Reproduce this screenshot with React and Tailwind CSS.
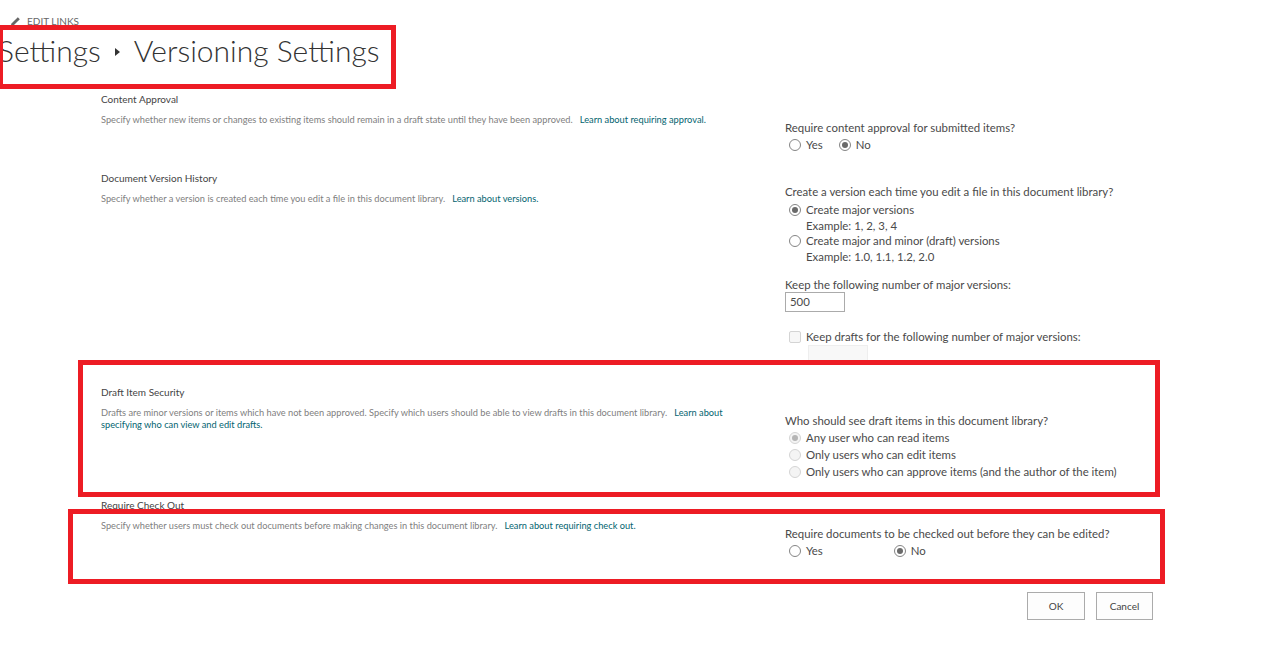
const FONT = "font-['Lato','Open_Sans',sans-serif]";

function Radio({ checked, disabled }) {
  return (
    <span className={`flex h-[12px] w-[12px] shrink-0 items-center justify-center rounded-full border ${disabled ? "border-[#d4d4d4] bg-[#f4f4f4]" : "border-[#858585] bg-white"}`}>
      {checked && <span className={`h-[6px] w-[6px] rounded-full ${disabled ? "bg-[#b5b5b5]" : "bg-[#6a6a6a]"}`} />}
    </span>
  );
}

function Option({ label, checked, disabled, className = "" }) {
  return (
    <div className={`flex items-center gap-[5px] pl-1 ${className || "h-[17px]"}`}>
      <Radio checked={checked} disabled={disabled} />
      <span>{label}</span>
    </div>
  );
}

function Section({ title, height, rightPad, children, desc }) {
  return (
    <div className="flex" style={{ height }}>
      <div className="w-[684px] shrink-0 pr-[30px]">
        <div className="text-[10px] leading-[14px] text-[#444444]">{title}</div>
        <div className="mt-[7.5px] text-[9.26px] leading-[12.5px] text-[#808080]">{desc}</div>
      </div>
      <div className="text-[11.4px] leading-[16px] text-[#4a4a4a]" style={{ paddingTop: rightPad }}>{children}</div>
    </div>
  );
}

function Link({ children }) {
  return <span className="text-[#03646f]">{children}</span>;
}

function Box({ className }) {
  return <div className={`pointer-events-none absolute border-[5px] border-[#ed1c24] ${className}`} />;
}

export default function App() {
  return (
    <div className={`relative h-[654px] w-[1280px] overflow-hidden bg-white ${FONT}`}>
      <div className="flex h-[14px] translate-y-[14px] items-center gap-[6px] pl-[10px] text-[10px] text-[#666666]">
        <svg width="11" height="11" viewBox="0 0 11 11"><path d="M0.5 10.5 L1.5 7.5 L7.8 1.2 L9.8 3.2 L3.5 9.5 Z" fill="#666666" /></svg>
        <span>EDIT LINKS</span>
      </div>
      <div className="ml-[-2px] mt-[16px] flex h-[40px] items-center whitespace-nowrap text-[30px] font-light leading-[40px] text-[#333333]">
        <span>Settings</span>
        <svg className="mx-[14px] mt-[4px]" width="5" height="8" viewBox="0 0 5 8"><path d="M0 0 L5 4 L0 8 Z" fill="#333333" /></svg>
        <span>Versioning Settings</span>
      </div>
      <div className="mt-[22px] pl-[101px]">
        <Section
          title="Content Approval"
          height={79}
          rightPad={28}
          desc={<>Specify whether new items or changes to existing items should remain in a draft state until they have been approved. &nbsp; <Link>Learn about requiring approval.</Link></>}
        >
          <div>Require content approval for submitted items?</div>
          <div className="flex">
            <Option label="Yes" className="h-[17px]" />
            <Option label="No" checked className="ml-[12px] h-[17px]" />
          </div>
        </Section>
        <Section
          title="Document Version History"
          height={214}
          rightPad={13}
          desc={<>Specify whether a version is created each time you edit a file in this document library. &nbsp; <Link>Learn about versions.</Link></>}
        >
          <div>Create a version each time you edit a file in this document library?</div>
          <Option label="Create major versions" checked className="mt-[1px] h-[17px]" />
          <div className="h-[15px] pl-[21px]">Example: 1, 2, 3, 4</div>
          <Option label="Create major and minor (draft) versions" className="h-[16px]" />
          <div className="h-[15px] pl-[21px]">Example: 1.0, 1.1, 1.2, 2.0</div>
          <div className="mt-[13px]">Keep the following number of major versions:</div>
          <div className="-mt-px flex h-[20px] w-[60px] items-center border border-[#ababab] pl-[4px]">500</div>
          <div className="mt-[16px] flex h-[17px] items-center gap-[5px] pl-[4px]">
            <span className="h-[12px] w-[12px] rounded-[2px] border border-[#d4d4d4] bg-[#f7f7f7]" />
            <span>Keep drafts for the following number of major versions:</span>
          </div>
          <div className="ml-[23px] h-[20px] w-[60px] border border-[#eeeeee] bg-[#f8f8f8]" />
        </Section>
        <Section
          title="Draft Item Security"
          height={113}
          rightPad={28}
          desc={<>Drafts are minor versions or items which have not been approved. Specify which users should be able to view drafts in this document library. &nbsp; <Link>Learn about specifying who can view and edit drafts.</Link></>}
        >
          <div>Who should see draft items in this document library?</div>
          <Option label="Any user who can read items" checked disabled />
          <Option label="Only users who can edit items" disabled />
          <Option label="Only users who can approve items (and the author of the item)" disabled />
        </Section>
        <Section
          title="Require Check Out"
          height={94}
          rightPad={28}
          desc={<>Specify whether users must check out documents before making changes in this document library. &nbsp; <Link>Learn about requiring check out.</Link></>}
        >
          <div>Require documents to be checked out before they can be edited?</div>
          <div className="flex">
            <Option label="Yes" className="h-[17px]" />
            <Option label="No" checked className="ml-[67px] h-[17px]" />
          </div>
        </Section>
      </div>
      <div className="flex w-[1153px] justify-end gap-[11px] text-[10px] text-[#444444]">
        <button className="h-[28px] w-[58px] border border-[#ababab] bg-[#fdfdfd]">OK</button>
        <button className="h-[28px] w-[57px] border border-[#ababab] bg-[#fdfdfd]">Cancel</button>
      </div>
      <Box className="left-[-2px] top-[25px] h-[64px] w-[398px]" />
      <Box className="left-[78px] top-[360px] h-[137px] w-[1082px]" />
      <Box className="left-[68px] top-[509px] h-[75px] w-[1097px]" />
    </div>
  );
}
